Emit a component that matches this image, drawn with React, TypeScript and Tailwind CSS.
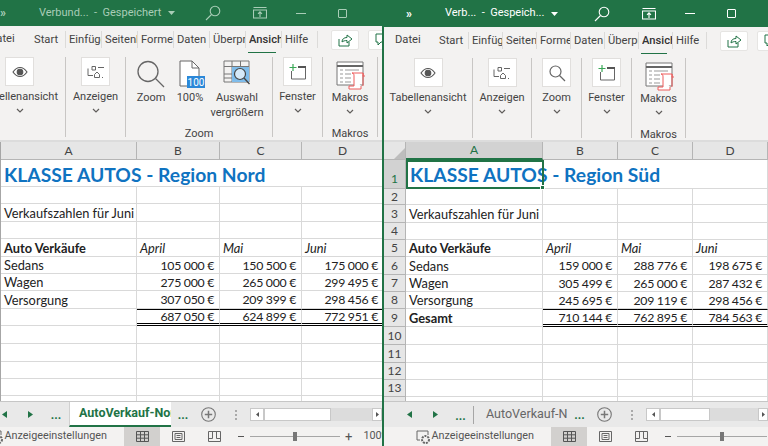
import { Fragment } from "react"
import type { ReactNode } from "react"

const GREEN = "#217346"

const Chevron = () => (
  <svg width="8" height="5" viewBox="0 0 8 5" fill="none" stroke="#605e5c" strokeWidth="1.2" className="shrink-0">
    <path d="M1 1l3 3 3-3" />
  </svg>
)

const EyeIcon = () => (
  <svg width="16" height="12" viewBox="0 0 16 12" fill="none" stroke="#555" strokeWidth="1.1">
    <path d="M1 6c2-3 4.500-4.500 7-4.500S13 3 15 6c-2 3-4.500 4.500-7 4.500S3 9 1 6z" />
    <circle cx="8" cy="6" r="2.800" fill="#555" />
  </svg>
)

const ShowIcon = () => (
  <svg width="18" height="14" viewBox="0 0 18 14" fill="none" stroke="#666" strokeWidth="1">
    <path d="M1 3.500v7h5M5 1.500h3.500v3.500H5zM11 2.500h6M7.500 12.500V9.500l2.500-2.500 2.500 2.500v3zM15 12.500h1" />
  </svg>
)

const ZoomSmallIcon = () => (
  <svg width="18" height="18" viewBox="0 0 18 18" fill="none" stroke="#666" strokeWidth="1.200">
    <circle cx="7.500" cy="7.500" r="5.500" />
    <path d="M11.500 11.500l5.500 5.500" />
  </svg>
)

const ZoomBigIcon = () => (
  <svg width="28" height="28" viewBox="0 0 28 28" fill="none" stroke="#666" strokeWidth="1.300">
    <circle cx="11" cy="11.500" r="10" />
    <path d="M18.500 18.500l8.500 8.500" />
  </svg>
)

const PageIcon = () => (
  <svg width="26" height="28" viewBox="0 0 26 28" fill="none" className="block ml-[3px]">
    <path d="M1 1h12l7 7v18H1z" fill="#fff" stroke="#666" />
    <path d="M13 1v7h7" stroke="#666" />
    <rect x="8" y="16" width="18" height="12" fill="#2b88d8" />
    <text x="17" y="25.500" fill="#fff" fontSize="10" textAnchor="middle" fontFamily="Roboto">100</text>
  </svg>
)

const SelectionIcon = () => (
  <svg width="28" height="26" viewBox="0 0 28 26" fill="none">
    <path d="M1 1h25v21H1zM1 6.500h25M1 14h8M1 18h8M9 1v21M17.500 1v5" stroke="#777" />
    <rect x="9" y="7" width="17" height="15" fill="#7fbcea" />
    <circle cx="17" cy="14" r="5.500" fill="#d5e9f8" stroke="#444" strokeWidth="1.200" />
    <path d="M21 18l5.500 6" stroke="#444" strokeWidth="1.300" />
  </svg>
)

const WindowIcon = () => (
  <svg width="18" height="16" viewBox="0 0 18 16" fill="none">
    <path d="M2.500 7v8h14V2.500H9" stroke="#666" />
    <path d="M9 3h8" stroke="#555" strokeWidth="2" />
    <path d="M4 0v7M.5 3.500h7" stroke="#3aa757" strokeWidth="1.200" />
  </svg>
)

const MacroIcon = () => (
  <svg width="30" height="29" viewBox="0 0 30 29" fill="none">
    <path d="M1 1h26v23H1z" fill="#fff" stroke="#777" />
    <path d="M1 5h26" stroke="#666" strokeWidth="2" />
    <path d="M4 9h3M9 9h14M4 13h3M9 13h6M4 17h3M9 17h6M4 21h3M9 21h6" stroke="#999" />
    <path d="M16 12h11v3h2M16 12c2 0 2 2 2 3v10h-5v3h12v-3M27 12v13" fill="#fff" stroke="#ee5a5a" />
  </svg>
)

const ShareIcon = () => (
  <svg width="15" height="14" viewBox="0 0 15 14" fill="none" stroke={GREEN} strokeWidth="1">
    <path d="M1 6v7h10V9M4 9c0-3 2-4.500 5-4.500V2l5 4-5 4V7.500C7 7.500 5 8 4 9z" />
  </svg>
)

const CommentIcon = () => (
  <svg width="14" height="13" viewBox="0 0 14 13" fill="none" stroke={GREEN} strokeWidth="1">
    <path d="M1 1h12v8H6l-3 3V9H1z" />
  </svg>
)

const RibbonButton = ({ label, icon }: { label: string; icon: ReactNode }) => (
  <>
    <div className="w-[29px] h-[29px] bg-white border border-[#e1dfdd] flex items-center justify-center shrink-0">{icon}</div>
    <div className="mt-[3px] leading-[16px] whitespace-nowrap">{label}</div>
    <div className="mt-[3px]"><Chevron /></div>
  </>
)

const Group = ({ className, children }: { className: string; children: ReactNode }) => (
  <div className={`h-[80px] mt-[4px] border-r border-[#c8c6c4] flex flex-col items-center shrink-0 ${className}`}>{children}</div>
)

const GroupLabel = ({ children }: { children: ReactNode }) => (
  <div className="mt-auto -mb-[3px] leading-[12px] whitespace-nowrap">{children}</div>
)

const MacroGroup = ({ className }: { className: string }) => (
  <Group className={className}>
    <div className="pt-[4px] pl-[2px]"><MacroIcon /></div>
    <div className="leading-[16px]">Makros</div>
    <div className="mt-[3px]"><Chevron /></div>
    <GroupLabel>Makros</GroupLabel>
  </Group>
)

const TitleBar = ({ text, active, className, textWidth }: { text: string; active: boolean; className: string; textWidth: string }) => {
  const c = active ? "#ffffff" : "#a9cdb7"
  return (
    <div className={`flex items-center bg-[#217346] shrink-0 overflow-hidden text-[11px] ${className}`} style={{ color: c }}>
      <div className="w-[39px] text-[12px] font-bold shrink-0">{"»"}</div>
      <div className={`whitespace-pre shrink-0 flex items-center gap-[7px] ${textWidth}`}>
        {text}
        <svg width="7" height="4" viewBox="0 0 7 4" fill={c}><path d="M0 0h7L3.500 4z" /></svg>
      </div>
      <svg width="16" height="16" viewBox="0 0 16 16" fill="none" stroke={c} strokeWidth="1.100" className="shrink-0">
        <circle cx="10" cy="6" r="4.800" />
        <path d="M6.500 9.500L1 15" />
      </svg>
      <svg width="14" height="12" viewBox="0 0 14 12" fill="none" stroke={c} strokeWidth="1.100" className="shrink-0 ml-[32px]">
        <path d="M.5 3h13v8H.5zM.5.500h13M7 10V5M5 6.800L7 4.800l2 2" />
      </svg>
      <div className="w-[10px] h-[1px] shrink-0 ml-[29px]" style={{ backgroundColor: c }} />
      <div className="w-[9px] h-[9px] border rounded-[1px] shrink-0 ml-[32px]" style={{ borderColor: c }} />
    </div>
  )
}

const ribbonTabs = ["Einfügen", "Seitenlayout", "Formeln", "Daten", "Überprüfen", "Ansicht", "Hilfe"]

const TabRow = ({ first, start, cell }: { first: string; start: string; cell: string }) => (
  <div className="h-[27px] flex items-center bg-[#f3f2f1] shrink-0 overflow-hidden text-[11.200px] text-[#444]">
    <div className={`shrink-0 ${first}`}>Datei</div>
    <div className={`shrink-0 pl-[5px] border-r border-[#dcdbd9] h-[17px] leading-[17px] ${start}`}>Start</div>
    {ribbonTabs.map((l) => {
      const on = l === "Ansicht"
      return (
        <div key={l} className={`relative shrink-0 pl-[3px] whitespace-nowrap border-r border-[#dcdbd9] h-[17px] leading-[17px] ${cell}`}>
          <div className={`overflow-hidden ${on ? "font-medium text-[#333]" : ""}`}>{l}</div>
          {on && <div className="absolute left-[2px] right-[5px] -bottom-[6px] h-[2px] bg-[#217346]" />}
        </div>
      )
    })}
    <div className="w-[28px] h-[20px] bg-white border border-[#e6e5e3] rounded-[2px] flex items-center justify-center shrink-0 ml-[13px]"><ShareIcon /></div>
    <div className="w-[28px] h-[20px] bg-white border border-[#e6e5e3] rounded-[2px] flex items-center justify-center shrink-0 ml-[9px]"><CommentIcon /></div>
  </div>
)

type Row = { a: string; bold?: boolean; cells?: string[]; months?: boolean; total?: boolean }

const cols = ["A", "B", "C", "D"]
const blank: Row = { a: "" }
const months = ["April", "Mai", "Juni"]

const northRows: Row[] = [
  blank,
  { a: "Verkaufszahlen für Juni" },
  blank,
  { a: "Auto Verkäufe", bold: true, months: true, cells: months },
  { a: "Sedans", cells: ["105 000 €", "150 500 €", "175 000 €"] },
  { a: "Wagen", cells: ["275 000 €", "265 000 €", "299 495 €"] },
  { a: "Versorgung", cells: ["307 050 €", "209 399 €", "298 456 €"] },
  { a: "", total: true, cells: ["687 050 €", "624 899 €", "772 951 €"] },
  blank, blank, blank, blank, blank,
]

const southRows: Row[] = [
  blank,
  { a: "Verkaufszahlen für Juni" },
  blank,
  { a: "Auto Verkäufe", bold: true, months: true, cells: months },
  { a: "Sedans", cells: ["159 000 €", "288 776 €", "198 675 €"] },
  { a: "Wagen", cells: ["305 499 €", "265 000 €", "287 432 €"] },
  { a: "Versorgung", cells: ["245 695 €", "209 119 €", "298 456 €"] },
  { a: "Gesamt", bold: true, total: true, cells: ["710 144 €", "762 895 €", "784 563 €"] },
  blank, blank, blank, blank, blank,
]

const gridLine = "border-r border-b border-[#d9d9d9]"
const headCell = "border-r border-b border-[#b5b5b5] flex items-center justify-center text-[12px]"

const SheetCells = ({ rows, title, titlePad, numbered }: { rows: Row[]; title: string; titlePad: string; numbered: boolean }) => (
  <>
    {numbered && <div className={`bg-[#d2d2d2] text-[#217346] ${headCell} !items-end`}>1</div>}
    <div className={`col-span-3 pt-[2px] text-[19.300px] font-bold text-[#0f73c1] leading-[25px] whitespace-nowrap border-b border-[#d9d9d9] ${titlePad}`}>{title}</div>
    <div className={gridLine} />
    {rows.map((r, i) => (
      <Fragment key={i}>
        {numbered && <div className={`bg-[#e6e6e6] text-[#444] ${headCell}`}>{i + 2}</div>}
        {[r.a, ...(r.cells ?? ["", "", ""])].map((v, j) => {
          const num = j > 0 && !r.months
          const edge = r.total && j > 0 ? "border-t border-t-black border-b-[3px] border-b-black [border-bottom-style:double]" : ""
          return (
            <div
              key={j}
              className={`${gridLine} ${edge} pl-[3px] pt-[2px] whitespace-nowrap flex items-center ${num ? "justify-end pr-[5px] text-[12.300px] tracking-[-0.3px]" : "pr-[4px]"} ${r.bold && j === 0 ? "font-bold" : ""} ${r.months && j > 0 ? "italic" : ""}`}
            >
              {v}
            </div>
          )
        })}
      </Fragment>
    ))}
  </>
)

const SheetBar = ({ lead, tabWidth, dots, plus, active, divider }: { lead: string; tabWidth: string; dots: string; plus: string; active: boolean; divider: boolean }) => (
  <div className="h-[26px] shrink-0 bg-[#e9e9e9] border-t border-[#c6c6c6] flex items-center overflow-hidden">
    <div className={`w-[26px] flex justify-center shrink-0 ${lead}`}>
      <svg width="5" height="7" viewBox="0 0 5 7" fill="#217346"><path d="M5 0v7L0 3.500z" /></svg>
    </div>
    <div className="w-[26px] flex justify-center shrink-0">
      <svg width="5" height="7" viewBox="0 0 5 7" fill="#217346"><path d="M0 0v7l5-3.500z" /></svg>
    </div>
    <div className={`w-[26px] text-center font-bold text-[#217346] text-[12px] shrink-0 ${divider ? "border-r border-[#a6a6a6] h-[18px] leading-[20px]" : ""}`}>...</div>
    {active ? (
      <div className={`h-[26px] -mt-[1px] bg-white border-l border-[#d0d0d0] border-b-2 border-b-[#217346] pl-[9px] overflow-hidden whitespace-nowrap text-[12.500px] font-bold text-[#217346] leading-[24px] shrink-0 ${tabWidth}`}>AutoVerkauf-Nord</div>
    ) : (
      <div className={`pl-[12px] overflow-hidden whitespace-nowrap text-[12.500px] text-[#666] shrink-0 ${tabWidth}`}>AutoVerkauf-Nord</div>
    )}
    <div className={`text-center font-bold text-[#217346] text-[12px] shrink-0 ${dots}`}>...</div>
    <div className={`flex justify-center shrink-0 ${plus}`}>
      <svg width="15" height="15" viewBox="0 0 15 15" fill="none" stroke="#777" strokeWidth="1.100">
        <circle cx="7.500" cy="7.500" r="6.800" />
        <path d="M7.500 3.800v7.400M3.800 7.500h7.400" strokeWidth="1.500" />
      </svg>
    </div>
    <div className="w-[29px] flex justify-center shrink-0">
      <svg width="2" height="10" viewBox="0 0 2 10" fill="#aaa"><path d="M0 0h2v2H0zM0 4h2v2H0zM0 8h2v2H0z" /></svg>
    </div>
    <div className="flex-1 h-[13px] bg-[#dcdcdc] flex items-center min-w-0">
      <div className="w-[14px] h-[13px] bg-white border border-[#c8c8c8] flex items-center justify-center shrink-0">
        <svg width="3" height="5" viewBox="0 0 3 5" fill="#555"><path d="M3 0v5L0 2.500z" /></svg>
      </div>
      <div className={`h-[13px] bg-white border border-[#c8c8c8] shrink-0 ${active ? "w-[67px]" : "w-[50px]"}`} />
      <div className="flex-1" />
      <div className="w-[10px] h-[13px] bg-white border border-[#c8c8c8] flex items-center justify-center shrink-0">
        <svg width="3" height="5" viewBox="0 0 3 5" fill="#555"><path d="M0 0v5l3-2.500z" /></svg>
      </div>
    </div>
  </div>
)

const StatusBar = ({ width }: { width: string }) => (
  <div className="h-[19px] shrink-0 bg-[#f3f2f1] flex items-center text-[10.800px] text-[#555] overflow-hidden">
    <div className={`flex items-center justify-end pr-[17px] shrink-0 whitespace-nowrap ${width}`}>
      <svg width="15" height="14" viewBox="0 0 15 14" fill="none" stroke="#666" className="shrink-0 mr-[1px]">
        <path d="M4 10H1V1h11v4" />
        <circle cx="9.500" cy="9.500" r="3.500" strokeWidth="2" strokeDasharray="2 1" />
      </svg>
      Anzeigeeinstellungen
    </div>
    <div className="w-[36px] h-[19px] bg-[#d2d0ce] flex items-center justify-center shrink-0">
      <svg width="13" height="11" viewBox="0 0 13 11" fill="none" stroke="#555"><path d="M.5.500h12v10H.5zM.5 3.800h12M.5 7.200h12M4.500.500v10M8.500.500v10" /></svg>
    </div>
    <div className="w-[36px] flex justify-center shrink-0">
      <svg width="13" height="11" viewBox="0 0 13 11" fill="none" stroke="#666"><path d="M.5.500h12v10H.5zM3 2.500h7v6H3zM4.500 4.500h4M4.500 6.500h4" /></svg>
    </div>
    <div className="w-[36px] flex justify-center shrink-0">
      <svg width="13" height="11" viewBox="0 0 13 11" fill="none" stroke="#666"><path d="M.5.500h12v10H.5zM.5 7.500h4V.500M8.500.500v7h4" /></svg>
    </div>
    <div className="w-[6px] h-[1px] bg-[#555] shrink-0 ml-[6px]" />
    <div className="relative w-[90px] h-[1px] bg-[#a6a6a6] shrink-0 ml-[6px]">
      <div className="absolute left-[43px] -top-[4px] w-[4px] h-[9px] bg-[#777]" />
    </div>
    <div className="shrink-0 ml-[5px] text-[13px] leading-none">+</div>
    <div className="shrink-0 ml-[11px]">100%</div>
  </div>
)

export default function App() {
  return (
    <div className="flex w-[768px] h-[446px] overflow-hidden bg-white font-['Roboto',sans-serif] text-[11px] text-[#444]">
      {/* left window, Region Nord */}
      <div className="w-[384px] h-[446px] shrink-0 flex flex-col border-r-2 border-[#217346] overflow-hidden">
        <TitleBar className="h-[26px]" textWidth="w-[166px]" active={false} text="Verbund...  -  Gespeichert" />
        <TabRow first="w-[51px] -ml-[22px] pl-[11px]" start="w-[37px]" cell="w-[36px]" />
        <div className="h-[87px] shrink-0 bg-[#f3f2f1] flex overflow-hidden">
          <Group className="w-[92px] -ml-[26px]"><RibbonButton label="Tabellenansicht" icon={<EyeIcon />} /></Group>
          <Group className="w-[60px]"><RibbonButton label="Anzeigen" icon={<ShowIcon />} /></Group>
          <Group className="w-[147px]">
            <div className="flex w-full pt-[3px]">
              <div className="w-[50px] flex flex-col items-center"><ZoomBigIcon /><div className="mt-[2px] leading-[16px]">Zoom</div></div>
              <div className="w-[28px] flex flex-col items-center"><PageIcon /><div className="mt-[2px] leading-[16px]">100%</div></div>
              <div className="w-[68px] flex flex-col items-center pr-[2px]">
                <SelectionIcon />
                <div className="mt-[4px] leading-[15px] text-center whitespace-nowrap">Auswahl<br />vergrößern</div>
              </div>
            </div>
            <GroupLabel>Zoom</GroupLabel>
          </Group>
          <Group className="w-[50px]"><RibbonButton label="Fenster" icon={<WindowIcon />} /></Group>
          <MacroGroup className="w-[55px]" />
        </div>
        <div className="h-[2px] shrink-0 bg-[#dcdcdc]" />
        <div className="flex-1 overflow-hidden border-l border-[#a6a6a6] font-['Lato',sans-serif] text-[12.800px] text-[#222] grid grid-cols-[136px_83px_82px_82px] grid-rows-[18px_27px_17px_18px_17px_18px_17px_17px_18px_17px_18px_18px_17px_17px_17px]">
          {cols.map((c) => (
            <div key={c} className={`bg-[#e6e6e6] text-[#444] ${headCell}`}>{c}</div>
          ))}
          <SheetCells rows={northRows} title="KLASSE AUTOS - Region Nord" titlePad="pl-[3px]" numbered={false} />
        </div>
        <SheetBar lead="-ml-[9px]" tabWidth="w-[102px]" dots="w-[24px]" plus="w-[26px]" active divider={false} />
        <StatusBar width="w-[124px]" />
      </div>

      {/* right window, Region Süd */}
      <div className="w-[384px] h-[446px] shrink-0 flex flex-col overflow-hidden">
        <TitleBar className="h-[27px] pl-[22px]" textWidth="w-[149px]" active text="Verb...  -  Gespeich..." />
        <TabRow first="w-[50px] pl-[11px]" start="w-[35px]" cell="w-[34px]" />
        <div className="h-[86px] shrink-0 bg-[#f3f2f1] flex overflow-hidden">
          <Group className="w-[89px]"><RibbonButton label="Tabellenansicht" icon={<EyeIcon />} /></Group>
          <Group className="w-[59px]"><RibbonButton label="Anzeigen" icon={<ShowIcon />} /></Group>
          <Group className="w-[50px]"><RibbonButton label="Zoom" icon={<ZoomSmallIcon />} /></Group>
          <Group className="w-[50px]"><RibbonButton label="Fenster" icon={<WindowIcon />} /></Group>
          <MacroGroup className="w-[54px]" />
        </div>
        <div className="h-[2px] shrink-0 bg-[#dcdcdc]" />
        <div className="relative flex-1 overflow-hidden font-['Lato',sans-serif] text-[12.800px] text-[#222] grid grid-cols-[22px_137px_75px_75px_75px] grid-rows-[18px_29px_16px_18px_17px_17px_18px_17px_17px_18px_18px_18px_17px_17px_17px]">
          <div className="bg-[#e6e6e6] border-r border-b border-[#b5b5b5] flex items-end justify-end">
            <svg width="11" height="11" viewBox="0 0 11 11" fill="#bdbdbd"><path d="M11 0v11H0z" /></svg>
          </div>
          {cols.map((c) => (
            <div key={c} className={`${headCell} ${c === "A" ? "bg-[#d2d2d2] !border-b-2 !border-b-[#217346] text-[#217346]" : "bg-[#e6e6e6] text-[#444]"}`}>{c}</div>
          ))}
          <SheetCells rows={southRows} title="KLASSE AUTOS - Region Süd" titlePad="pl-[4px]" numbered />
          {/* selected cell A1 */}
          <div className="absolute left-[22px] top-[18px] w-[138px] h-[29px] border-2 border-[#217346]">
            <div className="absolute -right-[3px] -bottom-[3px] w-[5px] h-[5px] bg-[#217346] border border-white" />
          </div>
        </div>
        <SheetBar lead="ml-[12px]" tabWidth="w-[93px]" dots="w-[25px]" plus="w-[25px]" active={false} divider />
        <StatusBar width="w-[167px]" />
      </div>
    </div>
  )
}
